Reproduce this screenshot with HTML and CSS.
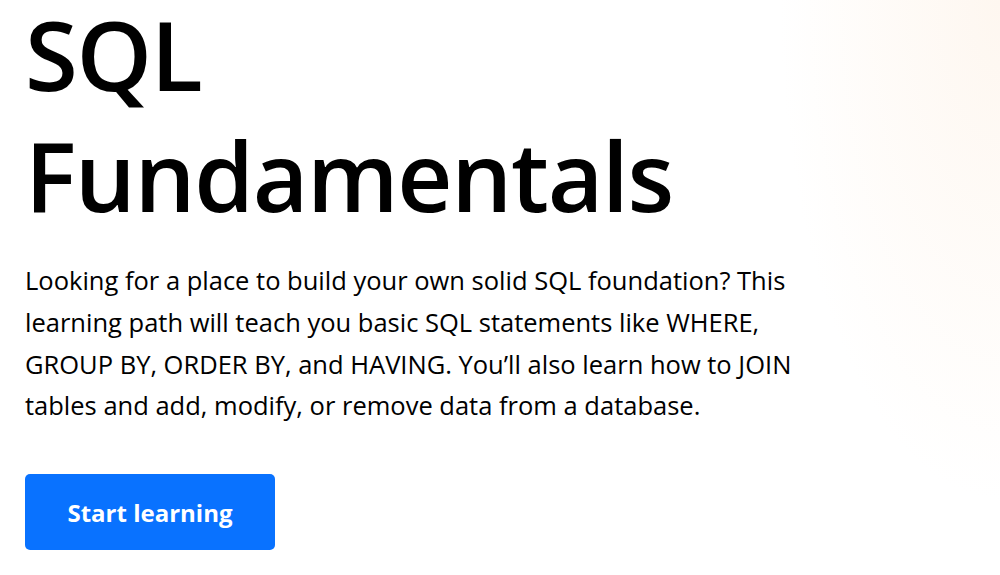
FILE: index.html
```html
<!DOCTYPE html>
<html lang="en">
<head>
<meta charset="utf-8">
<title>SQL Fundamentals</title>
<link rel="stylesheet" href="styles.css">
</head>
<body>
<main class="hero">
  <h1 class="hero-title"><span class="title-line first">SQL</span><span class="title-line second">Fundamentals</span></h1>
  <p class="hero-text">Looking for a place to build your own solid SQL foundation? This learning path will teach you basic SQL statements like WHERE, GROUP BY, ORDER BY, and HAVING. You’ll also learn how to JOIN tables and add, modify, or remove data from a database.</p>
  <a class="btn-primary" href="#">Start learning</a>
</main>
</body>
</html>
```
FILE: styles.css
```css
html, body {
  margin: 0;
  padding: 0;
  height: 100%;
}
body {
  font-family: "Open Sans", "Noto Sans", sans-serif;
  color: #000;
  background:
    radial-gradient(ellipse 220px 500px at 100% 0%, #fef7f0 0%, rgba(254,247,240,0.5) 50%, rgba(255,255,255,0) 100%),
    #fff;
  overflow: hidden;
}
.hero {
  padding-left: 25px;
  display: flex;
  flex-direction: column;
  align-items: flex-start;
}
.hero-title {
  margin: 0;
  display: flex;
  flex-direction: column;
  font-size: 96px;
  font-weight: 600;
  letter-spacing: -1.3px;
}
.title-line.first {
  line-height: 108px;
}
.title-line.second {
  line-height: 134px;
}
.hero-text {
  margin: 18px 0 0;
  width: 815px;
  font-size: 25.5px;
  line-height: 41.8px;
}
.btn-primary {
  margin-top: 47px;
  box-sizing: border-box;
  height: 76px;
  width: 250px;
  display: flex;
  align-items: center;
  justify-content: center;
  background: #0972ff;
  color: #fff;
  border-radius: 5px;
  font-size: 24px;
  font-weight: 700;
  text-decoration: none;
}
```
